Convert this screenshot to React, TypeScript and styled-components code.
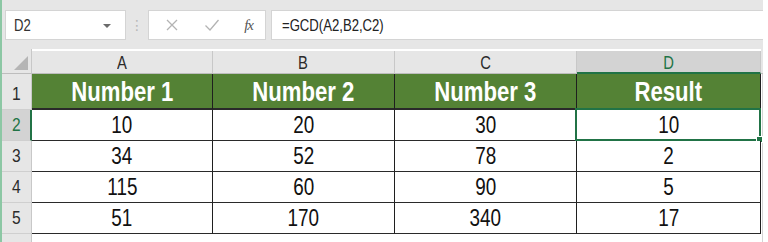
import React from "react";
import styled, { createGlobalStyle } from "styled-components";

const Global = createGlobalStyle`
  html, body { margin: 0; padding: 0; background: #ffffff; }
  body { font-family: "Liberation Sans", Arial, sans-serif; }
`;

const Page = styled.div`
  width: 768px;
  height: 242px;
  overflow: hidden;
  display: flex;
  background: #ffffff;
`;

const EdgeStripe = styled.div`
  width: 2px;
  flex: none;
  background: #8cc7a4;
`;

const Sheet = styled.div`
  width: 761px;
  flex: none;
  display: flex;
  flex-direction: column;
  background: #e6e6e6;
`;

const Narrow = styled.span<{ $left?: boolean }>`
  display: inline-block;
  white-space: nowrap;
  transform: scaleX(0.82);
  transform-origin: ${(p) => (p.$left ? "left center" : "center center")};
`;

const FormulaBar = styled.div`
  height: 49px;
  flex: none;
  display: flex;
  align-items: flex-start;
  padding: 10px 0 0 3px;
  box-sizing: border-box;
`;

const NameBox = styled.div`
  width: 121px;
  height: 30px;
  box-sizing: border-box;
  background: #ffffff;
  border: 1px solid #d4d4d4;
  display: flex;
  align-items: center;
  justify-content: space-between;
  padding: 1px 14px 0 8px;
  font-size: 16px;
  color: #333;
`;

const Caret = styled.span`
  width: 0;
  height: 0;
  border-left: 4px solid transparent;
  border-right: 4px solid transparent;
  border-top: 4px solid #6b6b6b;
`;

const Dots = styled.div`
  width: 22px;
  height: 30px;
  display: flex;
  align-items: center;
  justify-content: center;
  color: #b8b8b8;
  font-size: 14px;
  font-family: "DejaVu Sans", sans-serif;
`;

const IconBox = styled.div`
  width: 118px;
  height: 30px;
  box-sizing: border-box;
  background: #ffffff;
  border: 1px solid #d4d4d4;
  display: flex;
  align-items: center;
  justify-content: space-between;
  padding: 0 12px 0 16px;
`;

const Fx = styled.span`
  font-family: "Liberation Serif", serif;
  font-style: italic;
  font-size: 15px;
  color: #555;
  letter-spacing: -1px;
`;

const FormulaInput = styled.div`
  flex: 1;
  margin-left: 5px;
  height: 30px;
  box-sizing: border-box;
  background: #ffffff;
  border: 1px solid #d4d4d4;
  border-right: none;
  display: flex;
  align-items: center;
  padding: 1px 0 0 10px;
  font-size: 16px;
  color: #222;
`;

const Grid = styled.div`
  flex: none;
  display: grid;
  grid-template-columns: 30px 181px 182px 182px 184px 2px;
  grid-template-rows: 25px 36px repeat(5, 31px);
  background: #ffffff;
`;

const Corner = styled.div`
  background: #e6e6e6;
  border-right: 1px solid #c8c8c8;
  border-bottom: 1px solid #bdbdbd;
  position: relative;
  &::after {
    content: "";
    position: absolute;
    right: 3px;
    bottom: 3px;
    width: 0;
    height: 0;
    border-left: 14px solid transparent;
    border-bottom: 14px solid #b5b5b5;
  }
`;

const ColHead = styled.div<{ $active?: boolean }>`
  background: ${(p) => (p.$active ? "#d3d3d3" : "#e6e6e6")};
  color: ${(p) => (p.$active ? "#217346" : "#2b2b2b")};
  border-right: 1px solid #c8c8c8;
  border-bottom: ${(p) => (p.$active ? "2px solid #217346" : "1px solid #bdbdbd")};
  margin-top: 2px;
  display: flex;
  align-items: center;
  justify-content: center;
  font-size: 18px;
  padding-top: 3px;
`;

const HeadFill = styled.div`
  background: #e6e6e6;
  border-bottom: 1px solid #bdbdbd;
`;

const RowHead = styled.div<{ $active?: boolean }>`
  background: ${(p) => (p.$active ? "#d3d3d3" : "#e6e6e6")};
  color: ${(p) => (p.$active ? "#217346" : "#2b2b2b")};
  border-bottom: 1px solid #cfcfcf;
  border-right: ${(p) => (p.$active ? "2px solid #217346" : "1px solid #c8c8c8")};
  display: flex;
  align-items: flex-end;
  justify-content: center;
  padding-bottom: 4px;
  box-sizing: border-box;
  font-size: 19px;
`;

const HeaderCell = styled.div`
  background: #548235;
  color: #ffffff;
  font-weight: bold;
  font-size: 27px;
  display: flex;
  align-items: center;
  justify-content: center;
  border-right: 1px solid #1f1f1f;
  border-bottom: 2px solid #2a2a2a;
  padding-top: 2px;
`;

const Cell = styled.div`
  background: #ffffff;
  color: #111;
  font-size: 23px;
  display: flex;
  align-items: center;
  justify-content: center;
  border-right: 1px solid #1f1f1f;
  border-bottom: 1px solid #2a2a2a;
  padding-top: 1px;
  position: relative;
`;

const Selection = styled.div`
  position: absolute;
  left: -2px;
  top: -2px;
  right: -1px;
  bottom: -1px;
  border: 2px solid #217346;
  pointer-events: none;
  &::after {
    content: "";
    position: absolute;
    right: -4px;
    bottom: -4px;
    width: 5px;
    height: 5px;
    background: #217346;
    border: 1px solid #fff;
  }
`;

const Blank = styled.div`
  background: #ffffff;
`;

const Tail = styled.div`
  background: #ffffff;
  border-right: 1px solid #d4d4d4;
`;

const X = () => (
  <svg width="14" height="14" viewBox="0 0 14 14">
    <path d="M2 2 L12 12 M12 2 L2 12" stroke="#b3b3b3" strokeWidth="1.3" fill="none" />
  </svg>
);

const Check = () => (
  <svg width="16" height="14" viewBox="0 0 16 14">
    <path d="M1.5 7.5 L6 12 L14.5 2" stroke="#b3b3b3" strokeWidth="1.3" fill="none" />
  </svg>
);

const rows = [
  ["10", "20", "30", "10"],
  ["34", "52", "78", "2"],
  ["115", "60", "90", "5"],
  ["51", "170", "340", "17"],
];

const headers = ["Number 1", "Number 2", "Number 3", "Result"];
const letters = ["A", "B", "C", "D"];

export default function App() {
  return (
    <>
      <Global />
      <Page>
        <EdgeStripe />
        <Sheet>
          <FormulaBar>
            <NameBox>
              <Narrow $left>D2</Narrow>
              <Caret />
            </NameBox>
            <Dots>⋮</Dots>
            <IconBox>
              <X />
              <Check />
              <Fx>fx</Fx>
            </IconBox>
            <FormulaInput>
              <Narrow $left>=GCD(A2,B2,C2)</Narrow>
            </FormulaInput>
          </FormulaBar>
          <Grid>
            <Corner />
            {letters.map((l) => (
              <ColHead key={l} $active={l === "D"}>
                <Narrow>{l}</Narrow>
              </ColHead>
            ))}
            <HeadFill />

            <RowHead>
              <Narrow>1</Narrow>
            </RowHead>
            {headers.map((h) => (
              <HeaderCell key={h}>
                <Narrow>{h}</Narrow>
              </HeaderCell>
            ))}
            <Tail />

            {rows.map((r, i) => (
              <React.Fragment key={i}>
                <RowHead $active={i === 0}>
                  <Narrow>{i + 2}</Narrow>
                </RowHead>
                {r.map((v, j) => (
                  <Cell key={j}>
                    <Narrow>{v}</Narrow>
                    {i === 0 && j === 3 ? <Selection /> : null}
                  </Cell>
                ))}
                <Tail />
              </React.Fragment>
            ))}

            <RowHead>
              <Narrow>6</Narrow>
            </RowHead>
            <Blank />
            <Blank />
            <Blank />
            <Blank />
            <Tail />
          </Grid>
        </Sheet>
      </Page>
    </>
  );
}
